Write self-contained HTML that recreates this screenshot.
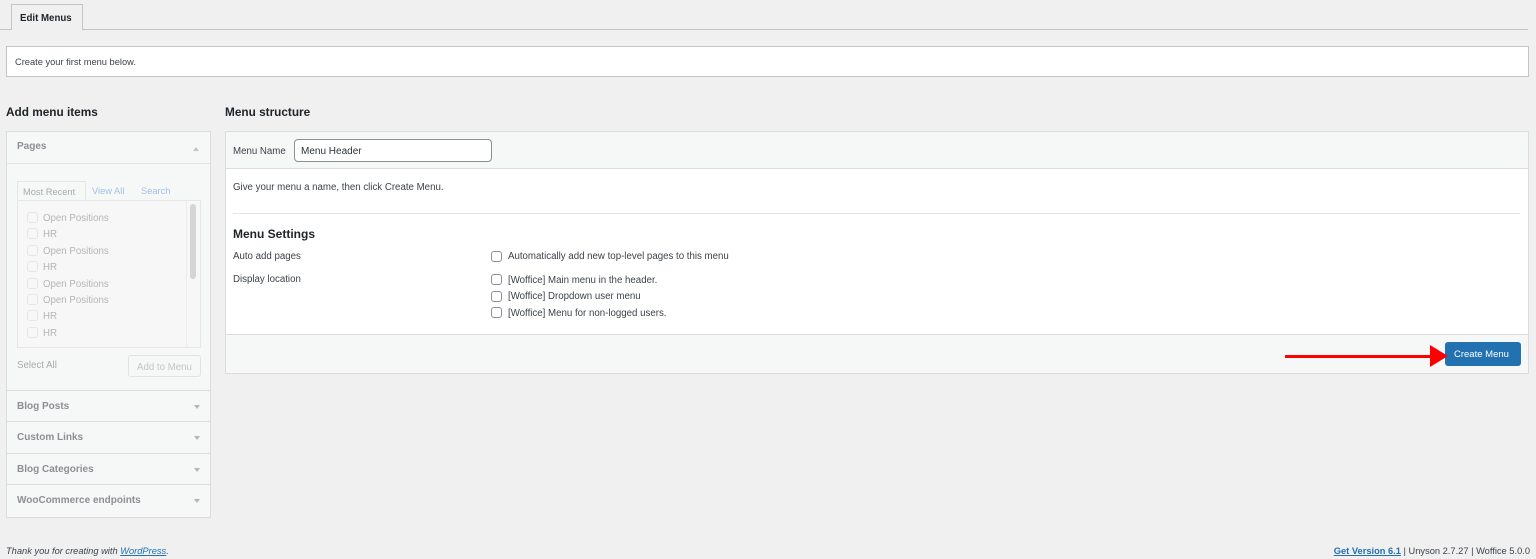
<!DOCTYPE html>
<html><head><style>
*{margin:0;padding:0;box-sizing:border-box}
body{width:1536px;height:559px;background:#f0f0f1;font-family:"Liberation Sans",sans-serif;font-size:9.7px;color:#3c434a;position:relative;overflow:hidden}
.a{position:absolute}
.cb{position:absolute;width:11px;height:11px;border:1px solid #8c8f94;border-radius:3px;background:#fff}
.gcb{position:absolute;width:11px;height:11px;border:1px solid #e6e6e6;border-radius:3px;left:27px}
.gi{position:absolute;left:43px;color:#b5b5b5}
.sec{position:absolute;left:7px;width:203px;height:32px;border-top:1px solid #dcdcde;background:#f6f7f7}
.sec span{position:absolute;left:10px;top:10px;font-weight:bold;font-size:10px;color:#8c8f94}
.sec i{position:absolute;right:10px;top:14px;border:3px solid transparent;border-top:4px solid #b5b5b5}
</style></head><body>
<div class="a" style="left:0;top:29px;width:1528px;height:1px;background:#c3c4c7"></div>
<div class="a" style="left:11px;top:4px;width:72px;height:26px;border:1px solid #c3c4c7;border-bottom:none;background:#f0f0f1;font-weight:bold;font-size:9.7px;color:#1d2327;padding:8px 0 0 8px">Edit Menus</div>
<div class="a" style="left:6px;top:46px;width:1523px;height:31px;background:#fff;border:1px solid #c3c4c7;padding:10px 0 0 8px;font-size:9.3px">Create your first menu below.</div>
<div class="a" style="left:6px;top:105px;font-weight:bold;font-size:11.8px;color:#1d2327">Add menu items</div>
<div class="a" style="left:225px;top:105px;font-weight:bold;font-size:11.8px;color:#1d2327">Menu structure</div>
<!-- left panel -->
<div class="a" style="left:6px;top:131px;width:205px;height:387px;border:1px solid #dcdcde;background:#f6f7f7"></div>
<div class="a" style="left:7px;top:163px;width:203px;height:1px;background:#e2e2e2"></div>
<div class="a" style="left:17px;top:141px;font-weight:bold;font-size:10px;color:#8c8f94">Pages</div>
<div class="a" style="left:193px;top:144px;border:3px solid transparent;border-bottom:4px solid #c3c4c7"></div>
<div class="a" style="left:17px;top:181px;width:69px;height:20px;border:1px solid #e6e6e6;border-bottom:none;background:#f6f7f7;color:#a7aaad;padding:5px 0 0 5px;font-size:9.3px">Most Recent</div>
<div class="a" style="left:92px;top:186px;color:#9ec2e6;font-size:9.3px">View All</div>
<div class="a" style="left:141px;top:186px;color:#9ec2e6;font-size:9.3px">Search</div>
<div class="a" style="left:17px;top:200px;width:184px;height:148px;border:1px solid #e6e6e6;background:#f7f7f7;overflow:hidden">
<div class="a" style="left:168px;top:0;width:1px;height:148px;background:#ececec"></div>
<div class="a" style="left:172px;top:3px;width:6px;height:75px;border-radius:3px;background:#d5d5d5"></div>
</div>
<div class="gcb" style="top:212px"></div><div class="gi" style="top:213px">Open Positions</div>
<div class="gcb" style="top:228px"></div><div class="gi" style="top:229px">HR</div>
<div class="gcb" style="top:245px"></div><div class="gi" style="top:246px">Open Positions</div>
<div class="gcb" style="top:261px"></div><div class="gi" style="top:262px">HR</div>
<div class="gcb" style="top:278px"></div><div class="gi" style="top:279px">Open Positions</div>
<div class="gcb" style="top:294px"></div><div class="gi" style="top:295px">Open Positions</div>
<div class="gcb" style="top:310px"></div><div class="gi" style="top:311px">HR</div>
<div class="gcb" style="top:327px"></div><div class="gi" style="top:328px">HR</div>
<div class="a" style="left:17px;top:360px;color:#a7aaad">Select All</div>
<div class="a" style="left:128px;top:355px;width:73px;height:22px;border:1px solid #e2e2e2;border-radius:3px;color:#c3c4c7;padding:6px 0 0 8px">Add to Menu</div>
<div class="sec" style="top:390px"><span>Blog Posts</span><i></i></div>
<div class="sec" style="top:421px"><span>Custom Links</span><i></i></div>
<div class="sec" style="top:453px"><span>Blog Categories</span><i></i></div>
<div class="sec" style="top:484px;height:33px"><span>WooCommerce endpoints</span><i></i></div>
<!-- right panel -->
<div class="a" style="left:225px;top:131px;width:1304px;height:243px;border:1px solid #dcdcde;background:#fff"></div>
<div class="a" style="left:226px;top:132px;width:1302px;height:37px;background:#f6f7f7;border-bottom:1px solid #dcdcde"></div>
<div class="a" style="left:233px;top:146px">Menu Name</div>
<div class="a" style="left:294px;top:139px;width:198px;height:23px;border:1px solid #8c8f94;border-radius:4px;background:#fff;padding:6px 0 0 6px;font-size:10px;color:#2c3338">Menu Header</div>
<div class="a" style="left:233px;top:182px">Give your menu a name, then click Create Menu.</div>
<div class="a" style="left:233px;top:213px;width:1287px;height:1px;background:#e6e6e6"></div>
<div class="a" style="left:233px;top:227px;font-weight:bold;font-size:12px;color:#1d2327">Menu Settings</div>
<div class="a" style="left:233px;top:251px">Auto add pages</div>
<div class="a" style="left:233px;top:274px">Display location</div>
<div class="cb" style="left:491px;top:251px"></div><div class="a" style="left:508px;top:251px">Automatically add new top-level pages to this menu</div>
<div class="cb" style="left:491px;top:274px"></div><div class="a" style="left:508px;top:275px">[Woffice] Main menu in the header.</div>
<div class="cb" style="left:491px;top:291px"></div><div class="a" style="left:508px;top:291px">[Woffice] Dropdown user menu</div>
<div class="cb" style="left:491px;top:307px"></div><div class="a" style="left:508px;top:308px">[Woffice] Menu for non-logged users.</div>
<div class="a" style="left:226px;top:334px;width:1302px;height:39px;background:#f6f7f7;border-top:1px solid #dcdcde"></div>
<div class="a" style="left:1445px;top:342px;width:76px;height:24px;background:#2271b1;border-radius:3px;color:#fff;font-size:9.5px;padding:7px 0 0 9px">Create Menu</div>
<div class="a" style="left:1285px;top:355px;width:150px;height:3px;background:#f00"></div>
<div class="a" style="left:1430px;top:345px;border-top:11px solid transparent;border-bottom:11px solid transparent;border-left:18px solid #f00;width:0;height:0"></div>
<div class="a" style="left:6px;top:546px;font-style:italic;font-size:9.3px">Thank you for creating with <span style="color:#2271b1;text-decoration:underline">WordPress</span>.</div>
<div class="a" style="right:6px;top:546px;font-size:9.3px"><span style="color:#2271b1;text-decoration:underline;font-weight:bold">Get Version 6.1</span> | Unyson 2.7.27 | Woffice 5.0.0</div>
</body></html>
